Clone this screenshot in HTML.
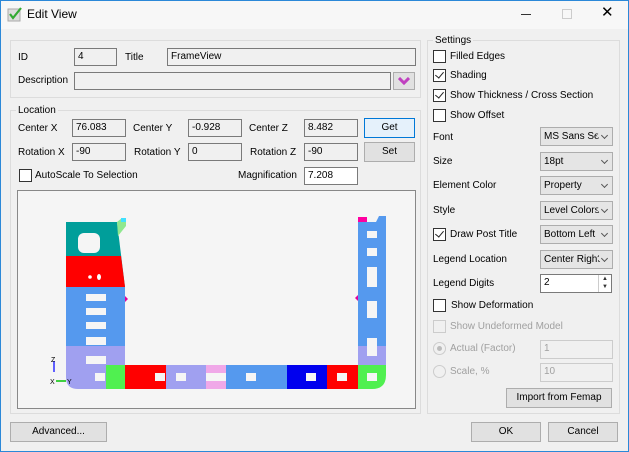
<!DOCTYPE html>
<html><head><style>
*{box-sizing:border-box;margin:0;padding:0}
body{width:629px;height:452px;overflow:hidden;font-family:"Liberation Sans",Arial,sans-serif;font-size:10px;color:#000;background:#f0f0f0;position:relative}
.a{position:absolute}
.win{position:absolute;left:0;top:0;width:629px;height:452px;border:1px solid #2b88d8}
.tb{left:1px;top:1px;width:627px;height:28px;background:#f7f7f7}
.grp{position:absolute;border:1px solid #dcdcdc}
.lbl{position:absolute;white-space:nowrap;line-height:13px}
.box{position:absolute;background:#f0f0f0;border:1px solid #7a7a7a;padding-left:3px;line-height:16px;white-space:nowrap}
.btn{position:absolute;background:#e1e1e1;border:1px solid #adadad;text-align:center;line-height:17px}
.cb{position:absolute;width:13px;height:13px;border:1px solid #333;background:#fff}
.cb.on::after{content:"";position:absolute;left:3px;top:0px;width:4px;height:7px;border:solid #222;border-width:0 1.5px 1.5px 0;transform:rotate(40deg)}
.cmb{position:absolute;background:#e5e5e5;border:1px solid #adadad;padding-left:3px;line-height:17px;white-space:nowrap;overflow:hidden}
.cmb::after{content:"";position:absolute;right:5px;top:5px;width:4px;height:4px;border:solid #555;border-width:0 1px 1px 0;transform:rotate(45deg);background:#e5e5e5;box-shadow:0 0 0 3px #e5e5e5}
.gray{color:#a0a0a0}
</style></head><body>
<div class="win"></div>
<div class="a tb"></div>
<svg class="a" style="left:7px;top:6px" width="16" height="16"><rect x="1" y="3" width="12" height="12" fill="#ddd" stroke="#aaa"/><path d="M3 8 L6 12 L14 2" stroke="#3a3" stroke-width="2.2" fill="none"/></svg>
<div class="lbl" style="left:27px;top:8px;font-size:12px">Edit View</div>
<div class="a" style="left:521px;top:14px;width:10px;height:1px;background:#333"></div>
<div class="a" style="left:562px;top:9px;width:10px;height:10px;border:1px solid #ccc"></div>
<div class="lbl" style="left:601px;top:6px;font-size:15px">✕</div>

<div class="grp" style="left:10px;top:40px;width:411px;height:58px"></div>
<div class="lbl" style="left:18px;top:51px">ID</div>
<div class="box" style="left:74px;top:48px;width:43px;height:18px">4</div>
<div class="lbl" style="left:125px;top:51px">Title</div>
<div class="box" style="left:167px;top:48px;width:249px;height:18px">FrameView</div>
<div class="lbl" style="left:18px;top:74px">Description</div>
<div class="box" style="left:74px;top:72px;width:317px;height:18px"></div>
<div class="btn" style="left:393px;top:72px;width:22px;height:18px"></div>
<svg class="a" style="left:398px;top:77px" width="12" height="8"><path d="M1 1 L6 6 L11 1" stroke="#c040c0" stroke-width="3" fill="none"/></svg>

<div class="grp" style="left:10px;top:110px;width:411px;height:304px"></div>
<div class="lbl" style="left:16px;top:104px;background:#f0f0f0;padding:0 2px">Location</div>
<div class="lbl" style="left:18px;top:122px">Center X</div>
<div class="box" style="left:72px;top:119px;width:54px;height:18px">76.083</div>
<div class="lbl" style="left:133px;top:122px">Center Y</div>
<div class="box" style="left:188px;top:119px;width:54px;height:18px">-0.928</div>
<div class="lbl" style="left:249px;top:122px">Center Z</div>
<div class="box" style="left:304px;top:119px;width:54px;height:18px">8.482</div>
<div class="btn" style="left:364px;top:118px;width:51px;height:20px;border-color:#0078d7;background:#e5f1fb">Get</div>
<div class="lbl" style="left:18px;top:146px">Rotation X</div>
<div class="box" style="left:72px;top:143px;width:54px;height:18px">-90</div>
<div class="lbl" style="left:134px;top:146px">Rotation Y</div>
<div class="box" style="left:188px;top:143px;width:54px;height:18px">0</div>
<div class="lbl" style="left:250px;top:146px">Rotation Z</div>
<div class="box" style="left:304px;top:143px;width:54px;height:18px">-90</div>
<div class="btn" style="left:364px;top:142px;width:51px;height:20px">Set</div>
<div class="cb" style="left:19px;top:169px"></div>
<div class="lbl" style="left:35px;top:169px">AutoScale To Selection</div>
<div class="lbl" style="left:238px;top:169px">Magnification</div>
<div class="box" style="left:304px;top:167px;width:54px;height:18px;background:#fff">7.208</div>

<div class="a" style="left:17px;top:190px;width:399px;height:219px;border:1px solid #888;background:#f5f5f5"></div>
<svg class="a" style="left:0;top:0" width="629" height="452">
<polygon points="66,222 117,222 125,287 66,287" fill="#009e9a"/>
<polygon points="66,256 121,256 125,287 66,287" fill="#ff0000"/>
<rect x="78" y="233" width="22" height="20" rx="6" fill="#f5f5f5"/>
<circle cx="90" cy="277" r="1.8" fill="#fff"/><ellipse cx="99" cy="277" rx="2" ry="3" fill="#fff"/>
<polygon points="117,222 122,218 126,218 126,226 118,236" fill="#8fe88f"/>
<rect x="121" y="218" width="5" height="4" fill="#40e0ff"/>
<rect x="66" y="287" width="59" height="60" fill="#5599ee"/>
<path d="M66,346 H125 V389 H78 Q66,389 66,377 Z" fill="#a0a0f0"/>
<rect x="86" y="294" width="20" height="7" fill="#f5f5f5"/><rect x="86" y="308" width="20" height="7" fill="#f5f5f5"/><rect x="86" y="322" width="20" height="7" fill="#f5f5f5"/><rect x="86" y="337" width="20" height="8" fill="#f5f5f5"/><rect x="86" y="356" width="20" height="8" fill="#f5f5f5"/><rect x="95" y="373" width="10" height="8" fill="#f5f5f5"/>
<path d="M125,296 l3,3 l-3,3z" fill="#e000a0"/>
<rect x="106" y="365" width="19" height="24" fill="#50f050"/>
<rect x="125" y="365" width="41" height="24" fill="#ff0000"/><rect x="155" y="373" width="10" height="8" fill="#f5f5f5"/>
<rect x="166" y="365" width="40" height="24" fill="#a0a0f0"/><rect x="176" y="373" width="10" height="8" fill="#f5f5f5"/>
<rect x="206" y="365" width="20" height="24" fill="#f0a8e8"/><rect x="206" y="373" width="20" height="8" fill="#f5f5f5"/>
<rect x="226" y="365" width="61" height="24" fill="#5599ee"/><rect x="246" y="373" width="10" height="8" fill="#f5f5f5"/>
<rect x="287" y="365" width="40" height="24" fill="#0000ee"/><rect x="306" y="373" width="10" height="8" fill="#f5f5f5"/>
<rect x="327" y="365" width="31" height="24" fill="#ff0000"/><rect x="337" y="373" width="10" height="8" fill="#f5f5f5"/>
<path d="M358,365 H386 V375 Q386,389 372,389 H358 Z" fill="#50f050"/><rect x="367" y="373" width="10" height="8" fill="#f5f5f5"/>
<path d="M358,222 H376 L379,216 H386 V346 H358 Z" fill="#5599ee"/>
<rect x="358" y="346" width="28" height="19" fill="#a0a0f0"/>
<rect x="358" y="217" width="9" height="5" fill="#ff00a0"/>
<rect x="367" y="231" width="10" height="7" fill="#f5f5f5"/><rect x="367" y="248" width="10" height="8" fill="#f5f5f5"/><rect x="367" y="267" width="10" height="20" fill="#f5f5f5"/><rect x="367" y="301" width="10" height="17" fill="#f5f5f5"/><rect x="367" y="338" width="10" height="18" fill="#f5f5f5"/>
<path d="M358,295 l-3,3 l3,3z" fill="#e000a0"/>
<path d="M54,372 V361" stroke="#6060ff" stroke-width="2"/><path d="M56,381 H66" stroke="#40d040" stroke-width="2"/>
<text x="51" y="362" font-size="7" font-family="Liberation Sans">Z</text><text x="50" y="384" font-size="7" font-family="Liberation Sans">X</text><text x="67" y="384" font-size="7" font-family="Liberation Sans">Y</text>
</svg>

<div class="grp" style="left:427px;top:40px;width:193px;height:374px"></div>
<div class="lbl" style="left:433px;top:34px;background:#f0f0f0;padding:0 2px">Settings</div>
<div class="cb" style="left:433px;top:50px"></div><div class="lbl" style="left:450px;top:50px">Filled Edges</div>
<div class="cb on" style="left:433px;top:69px"></div><div class="lbl" style="left:450px;top:69px">Shading</div>
<div class="cb on" style="left:433px;top:89px"></div><div class="lbl" style="left:450px;top:89px">Show Thickness / Cross Section</div>
<div class="cb" style="left:433px;top:109px"></div><div class="lbl" style="left:450px;top:109px">Show Offset</div>
<div class="lbl" style="left:433px;top:131px">Font</div><div class="cmb" style="left:540px;top:127px;width:73px;height:19px">MS Sans Se</div>
<div class="lbl" style="left:433px;top:155px">Size</div><div class="cmb" style="left:540px;top:152px;width:73px;height:19px">18pt</div>
<div class="lbl" style="left:433px;top:179px">Element Color</div><div class="cmb" style="left:540px;top:176px;width:73px;height:19px">Property</div>
<div class="lbl" style="left:433px;top:204px">Style</div><div class="cmb" style="left:540px;top:201px;width:73px;height:19px">Level Colors</div>
<div class="cb on" style="left:433px;top:228px"></div><div class="lbl" style="left:450px;top:228px">Draw Post Title</div><div class="cmb" style="left:540px;top:225px;width:73px;height:19px">Bottom Left</div>
<div class="lbl" style="left:433px;top:253px">Legend Location</div><div class="cmb" style="left:540px;top:250px;width:73px;height:19px">Center Right</div>
<div class="lbl" style="left:433px;top:277px">Legend Digits</div>
<div class="box" style="left:540px;top:274px;width:72px;height:19px;background:#fff">2</div>
<div class="a" style="left:598px;top:275px;width:13px;height:17px;border-left:1px solid #ccc;font-size:6px;text-align:center;line-height:8px;color:#333">▲<br>▼</div>
<div class="cb" style="left:433px;top:299px"></div><div class="lbl" style="left:451px;top:299px">Show Deformation</div>
<div class="cb" style="left:433px;top:320px;border-color:#ccc;background:#f0f0f0"></div><div class="lbl gray" style="left:450px;top:320px">Show Undeformed Model</div>
<div class="a" style="left:433px;top:342px;width:13px;height:13px;border:1px solid #ccc;border-radius:50%"></div><div class="a" style="left:437px;top:346px;width:5px;height:5px;border-radius:50%;background:#bbb"></div>
<div class="lbl gray" style="left:450px;top:342px">Actual (Factor)</div>
<div class="box gray" style="left:540px;top:340px;width:73px;height:19px;border-color:#ccc">1</div>
<div class="a" style="left:433px;top:365px;width:13px;height:13px;border:1px solid #ccc;border-radius:50%"></div>
<div class="lbl gray" style="left:450px;top:365px">Scale, %</div>
<div class="box gray" style="left:540px;top:363px;width:73px;height:19px;border-color:#ccc">10</div>
<div class="btn" style="left:506px;top:388px;width:106px;height:20px">Import from Femap</div>

<div class="btn" style="left:10px;top:422px;width:97px;height:20px">Advanced...</div>
<div class="btn" style="left:471px;top:422px;width:70px;height:20px">OK</div>
<div class="btn" style="left:548px;top:422px;width:70px;height:20px">Cancel</div>
</body></html>
